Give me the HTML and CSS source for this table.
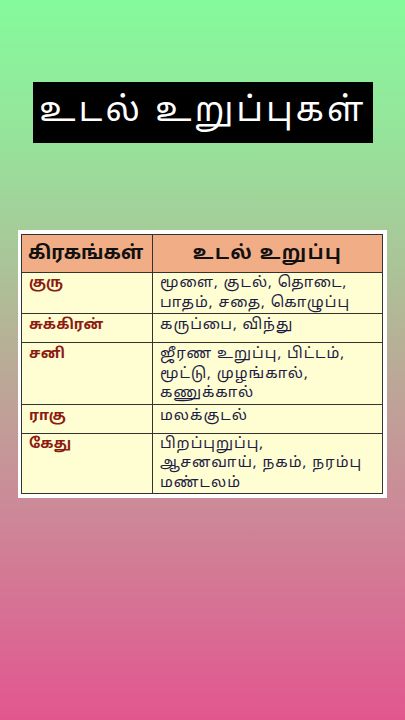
FILE: index.html
```html
<!DOCTYPE html>
<html lang="ta">
<head>
<meta charset="utf-8">
<link rel="stylesheet" href="styles.css">
</head>
<body>
<div class="page">
  <div class="title-box"><h1 class="title">உடல் உறுப்புகள்</h1></div>
  <div class="frame">
    <table class="grid">
      <colgroup><col class="c1"><col class="c2"></colgroup>
      <thead>
        <tr><th class="h-left">கிரகங்கள்</th><th class="h-right">உடல் உறுப்பு</th></tr>
      </thead>
      <tbody>
        <tr class="r2"><td class="planet">குரு</td><td class="organ">மூளை, குடல், தொடை,<br>பாதம், சதை, கொழுப்பு</td></tr>
        <tr class="r1"><td class="planet">சுக்கிரன்</td><td class="organ">கருப்பை, விந்து</td></tr>
        <tr class="r3"><td class="planet">சனி</td><td class="organ">ஜீரண உறுப்பு, பிட்டம்,<br>மூட்டு, முழங்கால்,<br>கணுக்கால்</td></tr>
        <tr class="r1"><td class="planet">ராகு</td><td class="organ">மலக்குடல்</td></tr>
        <tr class="r3b"><td class="planet">கேது</td><td class="organ">பிறப்புறுப்பு,<br>ஆசனவாய், நகம், நரம்பு<br>மண்டலம்</td></tr>
      </tbody>
    </table>
  </div>
</div>
</body>
</html>
```
FILE: styles.css
```css
html, body {
  margin: 0;
  padding: 0;
}
body {
  width: 405px;
  height: 720px;
  overflow: hidden;
  font-family: "Noto Sans Tamil", "Lohit Tamil", "Noto Sans", "DejaVu Sans", sans-serif;
}
.page {
  width: 405px;
  height: 720px;
  background: linear-gradient(to bottom, #85fa9b 0%, #97e29b 20%, #b4b596 45%, #cc8a98 70%, #e2568f 100%);
  display: flex;
  flex-direction: column;
  align-items: flex-start;
}
.title-box {
  margin: 82px 0 0 33px;
  width: 340px;
  height: 61px;
  background: #000;
  display: flex;
  align-items: center;
  justify-content: center;
}
.title {
  margin: 0;
  color: #fff;
  font-size: 34px;
  font-weight: 400;
  letter-spacing: 3.2px;
  line-height: 1;
  white-space: nowrap;
}
.frame {
  margin: 87px 0 0 18px;
  background: #fff;
  padding: 4px 4px 4px 3px;
}
.grid {
  border-collapse: collapse;
  table-layout: fixed;
  width: 361px;
  border: 1.5px solid #1e1e1e;
}
.c1 { width: 131px; }
.c2 { width: 230px; }
.grid th, .grid td {
  border: 1px solid #333;
  vertical-align: top;
  text-align: left;
  white-space: nowrap;
}
.grid th {
  background: #f1ad86;
  height: 37px;
  padding: 0 6px;
  vertical-align: middle;
  font-size: 19px;
  font-weight: 700;
  color: #111;
}
.h-right { text-align: center !important; letter-spacing: 1.5px; }
.grid td {
  background: #fffed2;
  padding: 1px 4px 0 7px;
  line-height: 19.5px;
}
.r1 td { height: 26px; padding-top: 2px; }
.r3 td { padding-top: 2px; }
.r3b td { line-height: 19.5px; padding-top: 1px; }
.planet {
  color: #8c1c12;
  font-weight: 700;
  font-size: 14.5px;
}
.organ {
  color: #1c1c44;
  font-size: 15px;
  letter-spacing: 1px;
}
```
